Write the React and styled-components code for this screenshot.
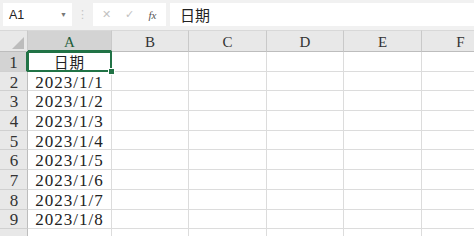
import React from 'react';
import styled, { createGlobalStyle } from 'styled-components';

const GlobalStyle = createGlobalStyle`
  html, body {
    margin: 0;
    padding: 0;
    background: #f1f1f1;
    overflow: hidden;
  }
`;

const Page = styled.div`
  width: 474px;
  height: 236px;
  overflow: hidden;
  background: #f1f1f1;
`;

const Toolbar = styled.div`
  display: flex;
  align-items: center;
  height: 30px;
  padding: 3px 0 4px 3px;
  box-sizing: border-box;
`;

const NameBox = styled.div`
  display: flex;
  align-items: center;
  justify-content: space-between;
  width: 69px;
  height: 23px;
  box-sizing: border-box;
  padding: 0 5px 0 6px;
  background: #fff;
  font-family: 'Liberation Sans', Arial, sans-serif;
  font-size: 12.5px;
  color: #222;
`;

const Caret = styled.span`
  font-size: 7px;
  color: #777;
`;

const Dots = styled.div`
  width: 21px;
  display: flex;
  justify-content: center;
  color: #c4c4c4;
  font-size: 11px;
  font-family: 'DejaVu Sans', sans-serif;
`;

const ButtonBox = styled.div`
  display: flex;
  align-items: center;
  justify-content: space-around;
  width: 73px;
  height: 23px;
  box-sizing: border-box;
  padding: 0 2px;
  background: #fff;
`;

const IconButton = styled.span`
  width: 20px;
  text-align: center;
  color: ${(p) => (p.dark ? '#555' : '#c2c2c2')};
  font-family: ${(p) => (p.dark ? "'Liberation Serif', serif" : "'DejaVu Sans', sans-serif")};
  font-style: ${(p) => (p.dark ? 'italic' : 'normal')};
  font-size: 11px;
`;

const FormulaInput = styled.div`
  flex: 1;
  height: 23px;
  margin-left: 4px;
  display: flex;
  align-items: center;
  padding-left: 10px;
  background: #fff;
  font-family: 'Noto Sans CJK SC', sans-serif;
  font-size: 15px;
  color: #222;
`;

const Grid = styled.div`
  display: grid;
  grid-template-columns: 28px 84px 77px 78px 77px 78px 78px;
  grid-template-rows: 22px repeat(10, 19.7px);
  background: #fff;
`;

const Corner = styled.div`
  position: relative;
  background: #e8e8e8;
  border-right: 1px solid #c9c9c9;
  border-bottom: 1px solid #bdbdbd;
  border-top: 1px solid #d8d8d8;
  box-sizing: border-box;
`;

const Triangle = styled.div`
  position: absolute;
  right: 3px;
  bottom: 2px;
  width: 0;
  height: 0;
  border-left: 12px solid transparent;
  border-bottom: 12px solid #bcbcbc;
`;

const ColHead = styled.div`
  display: flex;
  align-items: center;
  justify-content: center;
  box-sizing: border-box;
  background: ${(p) => (p.active ? '#d3d3d3' : '#e8e8e8')};
  border-top: 1px solid #d8d8d8;
  border-right: 1px solid #c9c9c9;
  border-bottom: ${(p) => (p.active ? '2px solid #217346' : '1px solid #bdbdbd')};
  font-family: 'Liberation Serif', serif;
  font-size: 15px;
  color: ${(p) => (p.active ? '#1d5c38' : '#333')};
  padding-top: 3px;
  overflow: hidden;
`;

const RowHead = styled.div`
  display: flex;
  align-items: center;
  justify-content: center;
  box-sizing: border-box;
  background: ${(p) => (p.active ? '#d3d3d3' : '#e8e8e8')};
  border-right: ${(p) => (p.active ? '2px solid #217346' : '1px solid #bdbdbd')};
  border-bottom: 1px solid #d0d0d0;
  font-family: 'Liberation Serif', serif;
  font-size: 17px;
  color: #333;
  padding: 3px 0 0 1px;
  overflow: hidden;
`;

const Cell = styled.div`
  position: relative;
  display: flex;
  align-items: center;
  justify-content: center;
  box-sizing: border-box;
  border-right: 1px solid #dcdcdc;
  border-bottom: 1px solid #dcdcdc;
  font-family: ${(p) => (p.cjk ? "'Noto Sans CJK SC', sans-serif" : "'Liberation Serif', serif")};
  font-size: ${(p) => (p.cjk ? '14.5px' : '17px')};
  letter-spacing: 1px;
  color: #222;
  white-space: nowrap;
  padding-top: ${(p) => (p.cjk ? '1px' : '3px')};
`;

const Selection = styled.div`
  position: absolute;
  left: -1px;
  top: -1px;
  right: -1px;
  bottom: -1px;
  border: 2px solid #217346;
  pointer-events: none;
`;

const FillHandle = styled.div`
  position: absolute;
  right: -4px;
  bottom: -4px;
  width: 5px;
  height: 5px;
  background: #217346;
  border: 1px solid #fff;
  z-index: 2;
`;

const columns = ['A', 'B', 'C', 'D', 'E', 'F'];
const values = ['日期', ...Array.from({ length: 8 }, (_, i) => `2023/1/${i + 1}`), ''];

export default function App() {
  return (
    <Page>
      <GlobalStyle />
      <Toolbar>
        <NameBox>
          A1
          <Caret>▼</Caret>
        </NameBox>
        <Dots>⋮</Dots>
        <ButtonBox>
          <IconButton>✕</IconButton>
          <IconButton>✓</IconButton>
          <IconButton dark>fx</IconButton>
        </ButtonBox>
        <FormulaInput>日期</FormulaInput>
      </Toolbar>
      <Grid>
        <Corner>
          <Triangle />
        </Corner>
        {columns.map((c) => (
          <ColHead key={c} active={c === 'A'}>
            {c}
          </ColHead>
        ))}
        {values.map((v, r) => (
          <React.Fragment key={r}>
            <RowHead active={r === 0}>{r < 9 ? r + 1 : ''}</RowHead>
            {columns.map((c) => (
              <Cell key={c} cjk={r === 0 && c === 'A'}>
                {c === 'A' ? v : ''}
                {r === 0 && c === 'A' && (
                  <>
                    <Selection />
                    <FillHandle />
                  </>
                )}
              </Cell>
            ))}
          </React.Fragment>
        ))}
      </Grid>
    </Page>
  );
}
